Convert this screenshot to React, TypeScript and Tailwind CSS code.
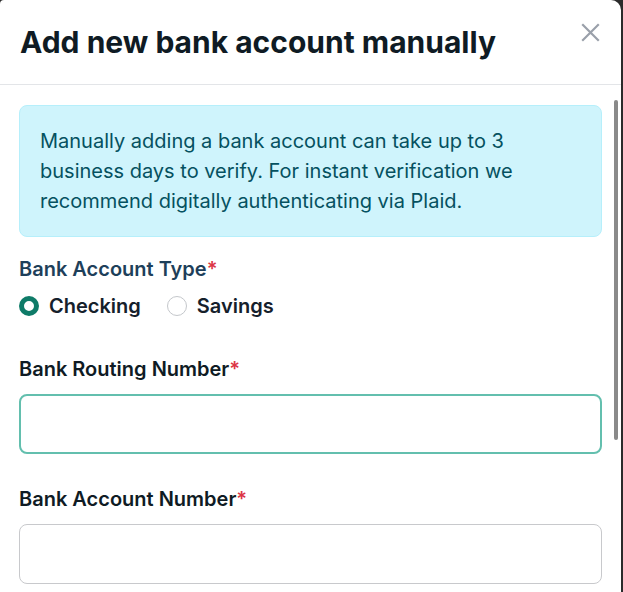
import React, { useState } from 'react';

const font = { fontFamily: 'Inter, "Noto Sans", sans-serif' };

const Required = () => <span className="text-[#dc3545]">*</span>;

export default function App() {
    const [accountType, setAccountType] = useState<'checking' | 'savings'>('checking');

    const radio = (value: 'checking' | 'savings', label: string) => {
        const checked = accountType === value;
        return (
            <button
                type="button"
                onClick={() => setAccountType(value)}
                className="flex items-center gap-[10px]"
            >
                <span
                    className={
                        checked
                            ? 'h-[20px] w-[20px] rounded-full border-[5px] border-[#0f7b68] bg-white'
                            : 'h-[20px] w-[20px] rounded-full border border-[#c4c7cb] bg-white'
                    }
                />
                <span className="text-[20px] font-semibold leading-[30px] text-[#15202b]">{label}</span>
            </button>
        );
    };

    return (
        <div className="h-[592px] w-[623px] overflow-hidden bg-[#2b2b2b]" style={font}>
            <div className="relative h-full w-[621px] rounded-tl-[4px] rounded-tr-[10px] bg-white">
                <div className="relative flex h-[85px] items-center border-b border-[#e3e5e8] px-5">
                    <h1 className="text-[30px] font-bold leading-[36px] text-[#0f1b24]">
                        Add new bank account manually
                    </h1>
                    <button type="button" aria-label="Close" className="absolute right-[21px] top-[23px] text-[#9aa0aa]">
                        <svg width="19" height="19" viewBox="0 0 19 19" fill="none" stroke="currentColor" strokeWidth="2.2" strokeLinecap="square">
                            <path d="M2 2L17 17M17 2L2 17" />
                        </svg>
                    </button>
                </div>

                <div className="px-[19px] pt-[20px]">
                    <div className="rounded-[8px] border border-[#b6effb] bg-[#cff4fc] px-5 py-5 text-[20px] leading-[30px] text-[#055160]">
                        Manually adding a bank account can take up to 3 business days to verify. For instant verification we recommend digitally authenticating via Plaid.
                    </div>

                    <div className="mt-[17px] text-[20px] font-semibold leading-[30px] text-[#1e3f5a]">
                        Bank Account Type<Required />
                    </div>
                    <div className="mt-[7px] flex items-center gap-[26px]">
                        {radio('checking', 'Checking')}
                        {radio('savings', 'Savings')}
                    </div>

                    <div className="mt-[33px] text-[20px] font-semibold leading-[30px] text-[#0f1b24]">
                        Bank Routing Number<Required />
                    </div>
                    <input
                        type="text"
                        className="mt-[10px] block h-[60px] w-full rounded-[8px] border-2 border-[#63bfae] px-4 text-[20px] outline-none"
                    />

                    <div className="mt-[30px] text-[20px] font-semibold leading-[30px] text-[#0f1b24]">
                        Bank Account Number<Required />
                    </div>
                    <input
                        type="text"
                        className="mt-[10px] block h-[60px] w-full rounded-[8px] border border-[#c8c9cc] px-4 text-[20px] outline-none"
                    />
                </div>

                <div className="absolute right-[3px] top-[100px] h-[340px] w-[4px] rounded-full bg-[#8a8a8a]" />
            </div>
        </div>
    );
}
